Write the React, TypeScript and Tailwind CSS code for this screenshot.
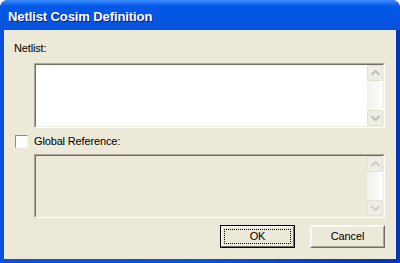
import React from "react";

const font = { fontFamily: '"Liberation Sans", Arial, sans-serif' };

function Chevron({ up, disabled }: { up?: boolean; disabled?: boolean }) {
  return (
    <svg width="9" height="6" viewBox="0 0 9 6">
      <path
        d={up ? "M0.5 5 L4.5 1 L8.5 5" : "M0.5 1 L4.5 5 L8.5 1"}
        fill="none"
        stroke={disabled ? "#d0cec3" : "#c1c0b6"}
        strokeWidth="2"
      />
    </svg>
  );
}

function ScrollBar({ disabled }: { disabled?: boolean }) {
  return (
    <div className="flex h-full w-[16px] flex-col justify-between bg-gradient-to-r from-[#f3f1ea] to-[#fdfdfb]">
      <div className="flex h-[16px] w-[16px] items-center justify-center rounded-[2px] border border-[#e3e0d3] bg-[#eeede6]">
        <Chevron up disabled={disabled} />
      </div>
      <div className="flex h-[16px] w-[16px] items-center justify-center rounded-[2px] border border-[#e3e0d3] bg-[#eeede6]">
        <Chevron disabled={disabled} />
      </div>
    </div>
  );
}

function TextBox({ disabled, height }: { disabled?: boolean; height: string }) {
  return (
    <div className={`${height} border border-t-[#aca899] border-l-[#aca899] border-b-white border-r-white`}>
      <div
        className={`flex h-full justify-end border border-t-[#716f64] border-l-[#716f64] border-b-[#f1efe2] border-r-[#f1efe2] ${
          disabled ? "bg-[#ece9d8]" : "bg-white"
        }`}
      >
        <ScrollBar disabled={disabled} />
      </div>
    </div>
  );
}

export default function App() {
  return (
    <div className="h-[263px] w-[400px] overflow-hidden" style={font}>
      <div className="flex h-full w-full flex-col rounded-t-[8px] bg-gradient-to-r from-[#0a4fe0] via-[#0055e5] to-[#0036b8]">
        <div className="flex h-[30px] shrink-0 items-center rounded-t-[8px] bg-gradient-to-b from-[#3d8dff] via-[#0058e8] via-[20%] to-[#0a52dc] pl-[8px] pt-[3px]">
          <span className="text-[13px] font-bold tracking-[-0.1px] text-white [text-shadow:1px_1px_#0a1a8a]">
            Netlist Cosim Definition
          </span>
        </div>
        <div className="mx-[4px] mb-[4px] flex flex-1 flex-col bg-[#ece9d8] pl-[10px] pr-[11px] pt-[11px] text-[11px] tracking-[-0.15px] text-black">
          <div className="h-[14px] leading-[14px]">Netlist:</div>
          <div className="ml-[20px] mt-[8px]">
            <TextBox height="h-[65px]" />
          </div>
          <div className="ml-[1px] mt-[7px] flex h-[13px] items-center gap-[6px]">
            <div className="h-[13px] w-[13px] border border-t-[#8d8b80] border-l-[#8d8b80] border-b-[#f4f3ee] border-r-[#f4f3ee] bg-white" />
            <span className="leading-[13px]">Global Reference:</span>
          </div>
          <div className="ml-[20px] mt-[6px]">
            <TextBox disabled height="h-[64px]" />
          </div>
          <div className="mt-[7px] flex justify-end gap-[15px]">
            <div className="h-[23px] w-[75px] border border-black">
              <div className="h-full border border-t-white border-l-white border-b-[#716f64] border-r-[#716f64] bg-[#ece9d8] p-[2px]">
                <div className="flex h-full items-center justify-center border border-dotted border-black leading-none">
                  OK
                </div>
              </div>
            </div>
            <div className="h-[23px] w-[75px] border border-t-white border-l-white border-b-[#716f64] border-r-[#716f64]">
              <div className="flex h-full items-center justify-center border border-t-[#f5f4ee] border-l-[#f5f4ee] border-b-[#aca899] border-r-[#aca899] bg-[#ece9d8] leading-none">
                Cancel
              </div>
            </div>
          </div>
        </div>
      </div>
    </div>
  );
}
